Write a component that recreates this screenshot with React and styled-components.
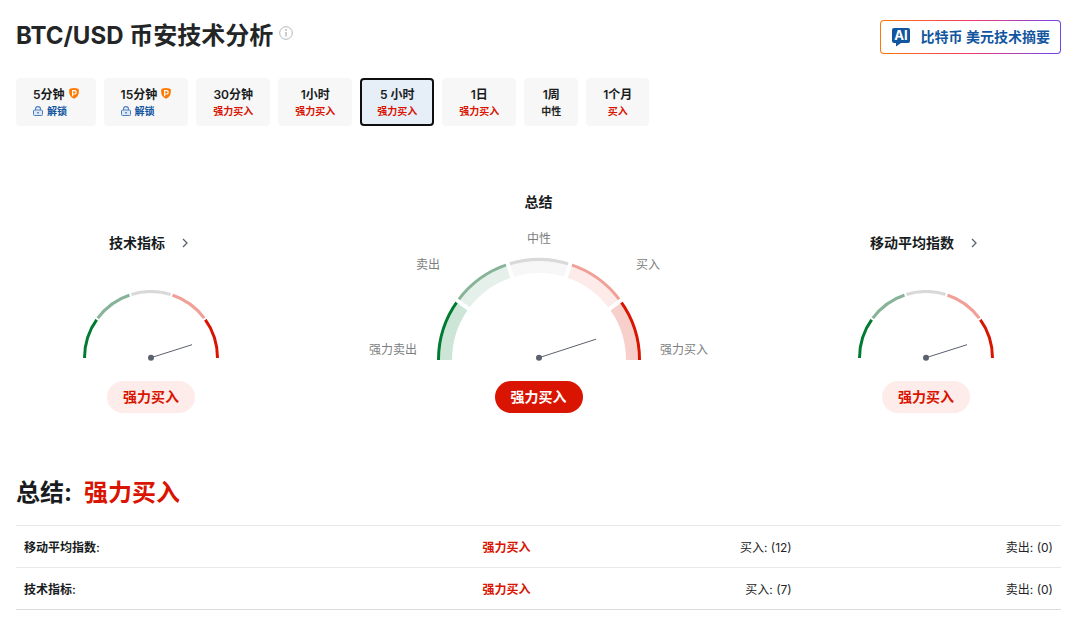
import React, { useState } from "react";
import styled, { createGlobalStyle } from "styled-components";

const RED = "#d91400";
const GREEN = "#007c32";

const GlobalStyle = createGlobalStyle`
  * { box-sizing: border-box; }
  body {
    margin: 0;
    background: #fff;
    color: #232526;
    font-family: Inter, "Noto Sans CJK SC", sans-serif;
  }
  button { font-family: inherit; cursor: pointer; }
`;

const Page = styled.main`
  padding: 20px 17px 12px 16px;
`;

const Header = styled.header`
  display: flex;
  align-items: flex-start;
  justify-content: space-between;
`;

const TitleGroup = styled.div`
  display: flex;
  align-items: flex-start;
  gap: 6px;
`;

const Title = styled.h1`
  margin: 0;
  font-size: 24px;
  line-height: 32px;
  font-weight: 700;
`;

const InfoButton = styled.button`
  display: flex;
  margin: 6px 0 0;
  padding: 0;
  border: 0;
  background: none;
`;

const AiButton = styled.button`
  display: flex;
  align-items: center;
  gap: 9px;
  height: 34px;
  padding: 0 10px;
  border: 1px solid transparent;
  border-radius: 4px;
  background: linear-gradient(#fff, #fff) padding-box,
    linear-gradient(96deg, #ff7901 0%, #f23a6b 50%, #6a45f5 100%) border-box;
  color: #1256a0;
  font-size: 14px;
  line-height: 20px;
  font-weight: 600;
`;

const Periods = styled.div`
  display: flex;
  flex-wrap: wrap;
  gap: 8px;
  margin-top: 24px;
`;

const PeriodButton = styled.button`
  display: flex;
  flex-direction: column;
  align-items: center;
  justify-content: center;
  height: 48px;
  padding: 1px 15px 0;
  border: 2px solid ${(p) => (p.$active ? "#0f0f10" : "transparent")};
  border-radius: 4px;
  background: ${(p) => (p.$active ? "#e6eef8" : "#f7f7f8")} border-box;
`;

const PeriodName = styled.span`
  display: flex;
  align-items: center;
  gap: 4px;
  font-size: 12px;
  line-height: 17px;
  font-weight: 600;
  color: #181c21;
`;

const signalColors = { buy: RED, neutral: "#232526", locked: "#1256a0" };

const PeriodSignal = styled.span`
  display: flex;
  align-items: center;
  align-self: ${(p) => (p.$kind === "locked" ? "flex-start" : "center")};
  gap: 4px;
  font-size: 10px;
  line-height: 16px;
  font-weight: 600;
  color: ${(p) => signalColors[p.$kind]};
`;

const Gauges = styled.section`
  display: grid;
  grid-template-columns: 270fr 505fr 270fr;
  align-items: end;
  margin-top: 66px;
`;

const GaugeCard = styled.div`
  display: flex;
  flex-direction: column;
  align-items: center;
`;

const GaugeTitle = styled.h2`
  margin: 0 0 ${(p) => (p.$main ? 17 : 37)}px;
  font-size: 14px;
  line-height: 20px;
  font-weight: 700;
  color: #181c21;
`;

const GaugeLink = styled.a`
  display: flex;
  align-items: center;
  gap: 12px;
  color: inherit;
  text-decoration: none;
`;

const Drawing = styled.svg`
  display: block;
  flex: none;
`;

const DialLabel = styled.text`
  font-size: 12px;
  fill: #7c7e80;
`;

const Pill = styled.div`
  margin-top: 20px;
  padding: 0 16px;
  border-radius: 16px;
  font-size: 14px;
  line-height: 32px;
  font-weight: 700;
  color: ${(p) => (p.$solid ? "#fff" : RED)};
  background: ${(p) => (p.$solid ? RED : "#fdecea")};
`;

const SummaryHeading = styled.h2`
  display: flex;
  gap: 12px;
  margin: 64px 0 16px;
  font-size: 24px;
  line-height: 32px;
  font-weight: 700;
  color: #181c21;
`;

const Verdict = styled.span`
  color: ${RED};
`;

const SummaryTable = styled.table`
  width: 100%;
  table-layout: fixed;
  border-collapse: separate;
  border-spacing: 0;
  border-top: 1px solid #e6e9eb;
  font-size: 12px;
  line-height: 16px;
`;

const Row = styled.tr`
  & > * {
    height: 42px;
    padding: 3px 8px 0;
    border-bottom: 1px solid #e6e9eb;
  }
  &:last-child > * { border-bottom-color: #d9dcdf; }
`;

const RowName = styled.th`
  text-align: left;
  font-weight: 600;
  color: #181c21;
`;

const Cell = styled.td`
  text-align: right;
  font-weight: ${(p) => (p.$strong ? 700 : 400)};
  color: ${(p) => (p.$strong ? RED : "#232526")};
`;

const InfoIcon = () => (
  <Drawing width="14" height="14" viewBox="0 0 14 14" fill="none" aria-hidden="true">
    <circle cx="7" cy="7" r="6.3" stroke="#b5b8bb" strokeWidth="1" />
    <path d="M7 6V10.4" stroke="#b5b8bb" strokeWidth="1.4" />
    <circle cx="7" cy="4" r="0.9" fill="#b5b8bb" />
  </Drawing>
);

const AiIcon = () => (
  <Drawing width="20" height="20" viewBox="0 0 20 20" aria-hidden="true">
    <path d="M3 1H17Q19 1 19 3V14Q19 16 17 16H10L5 19.5V16H3Q1 16 1 14V3Q1 1 3 1Z" fill="#1256a0" />
    <text x="10" y="13" textAnchor="middle" fontSize="13" fontWeight="700" fill="#fff">AI</text>
  </Drawing>
);

const ProIcon = () => (
  <Drawing width="10" height="14" viewBox="0 0 10 14" fill="none" aria-hidden="true">
    <path d="M.2 1.8Q.3.7 1.6.4Q5-.2 8.4.4Q9.7.7 9.8 1.8Q10.5 8.4 5 10.8Q-.5 8.4 .2 1.8Z" fill="#ff7901" />
    <path d="M3.6 8.2V2.6H5.3Q7.2 2.6 7.2 4.3T5.3 6H3.6" stroke="#fff" strokeWidth="1.2" />
  </Drawing>
);

const LockIcon = () => (
  <Drawing width="10" height="10" viewBox="0 0 10 10" fill="none" aria-hidden="true">
    <path d="M2.6 4V2.8Q2.6.6 5 .6T7.4 2.8V4" stroke="#4a80bf" strokeWidth="1.1" />
    <rect x="0.5" y="4" width="9" height="5.5" rx="1" fill="#dfe9f5" stroke="#4a80bf" />
    <path d="M5 6V7.6" stroke="#1256a0" strokeWidth="1.2" />
  </Drawing>
);

const ChevronIcon = () => (
  <Drawing width="16" height="16" viewBox="0 0 16 16" fill="none" aria-hidden="true">
    <path d="M6 4L10 8L6 12" stroke="#5b616e" strokeWidth="1.3" />
  </Drawing>
);

const polar = (cx, cy, r, deg) => {
  const a = (deg * Math.PI) / 180;
  return [cx - r * Math.cos(a), cy - r * Math.sin(a)];
};

const arc = (cx, cy, r, from, to) => {
  const [x1, y1] = polar(cx, cy, r, from);
  const [x2, y2] = polar(cx, cy, r, to);
  return `M${x1} ${y1}A${r} ${r} 0 0 1 ${x2} ${y2}`;
};

const ringColors = [GREEN, "#87b498", "#d9d9d9", "#f1a097", RED];
const bandColors = ["#cce5d6", "#e6f0ea", "#f7f7f7", "#fdebea", "#f7d0cc"];

function Dial({ cx, cy, radius, band = 0, gap }) {
  return (
    <g fill="none">
      {ringColors.map((color, i) => (
        <g key={color}>
          {band > 0 && (
            <path d={arc(cx, cy, radius - 3 - band / 2, i * 36, i * 36 + 36)} stroke={bandColors[i]} strokeWidth={band} />
          )}
          <path d={arc(cx, cy, radius - 1.5, i * 36, i * 36 + 36)} stroke={color} strokeWidth="3" />
        </g>
      ))}
      {[36, 72, 108, 144].map((deg) => {
        const [x1, y1] = polar(cx, cy, radius - 5 - band, deg);
        const [x2, y2] = polar(cx, cy, radius + 1, deg);
        return <line key={deg} x1={x1} y1={y1} x2={x2} y2={y2} stroke="#fff" strokeWidth={gap} />;
      })}
    </g>
  );
}

function Needle({ x, y, dx, dy }) {
  return (
    <g>
      <line x1={x} y1={y} x2={x + dx} y2={y + dy} stroke="#5b616e" strokeWidth="1" />
      <circle cx={x} cy={y} r="3" fill="#5b616e" />
    </g>
  );
}

function SideGauge({ title }) {
  return (
    <GaugeCard>
      <GaugeTitle>
        <GaugeLink href="#details">{title}<ChevronIcon /></GaugeLink>
      </GaugeTitle>
      <Drawing width="136" height="71" viewBox="0 0 136 71" role="img" aria-label={title}>
        <Dial cx={68} cy={68} radius={68} gap={2} />
        <Needle x={68} y={67.7} dx={41} dy={-13} />
      </Drawing>
      <Pill>强力买入</Pill>
    </GaugeCard>
  );
}

function MainGauge() {
  return (
    <GaugeCard>
      <GaugeTitle $main>总结</GaugeTitle>
      <Drawing width="340" height="132" viewBox="0 0 340 132" role="img" aria-label="总结">
        <Dial cx={170} cy={131} radius={102} band={12} gap={4} />
        <Needle x={170} y={128.7} dx={57} dy={-18.5} />
        <DialLabel x="170" y="14" textAnchor="middle">中性</DialLabel>
        <DialLabel x="71" y="40" textAnchor="end">卖出</DialLabel>
        <DialLabel x="267" y="40">买入</DialLabel>
        <DialLabel x="48" y="125" textAnchor="end">强力卖出</DialLabel>
        <DialLabel x="291" y="125">强力买入</DialLabel>
      </Drawing>
      <Pill $solid>强力买入</Pill>
    </GaugeCard>
  );
}

const periods = [
  { name: "5分钟", signal: "解锁", kind: "locked" },
  { name: "15分钟", signal: "解锁", kind: "locked" },
  { name: "30分钟", signal: "强力买入", kind: "buy" },
  { name: "1小时", signal: "强力买入", kind: "buy" },
  { name: "5 小时", signal: "强力买入", kind: "buy" },
  { name: "1日", signal: "强力买入", kind: "buy" },
  { name: "1周", signal: "中性", kind: "neutral" },
  { name: "1个月", signal: "买入", kind: "buy" },
];

const rows = [
  { name: "移动平均指数:", buy: 12, sell: 0 },
  { name: "技术指标:", buy: 7, sell: 0 },
];

export default function App() {
  const [active, setActive] = useState("5 小时");
  return (
    <Page>
      <GlobalStyle />
      <Header>
        <TitleGroup>
          <Title>BTC/USD 币安技术分析</Title>
          <InfoButton type="button" aria-label="信息"><InfoIcon /></InfoButton>
        </TitleGroup>
        <AiButton type="button"><AiIcon />比特币 美元技术摘要</AiButton>
      </Header>
      <Periods>
        {periods.map(({ name, signal, kind }) => (
          <PeriodButton key={name} type="button" $active={name === active} aria-pressed={name === active} onClick={() => setActive(name)}>
            <PeriodName>{name}{kind === "locked" && <ProIcon />}</PeriodName>
            <PeriodSignal $kind={kind}>{kind === "locked" && <LockIcon />}{signal}</PeriodSignal>
          </PeriodButton>
        ))}
      </Periods>
      <Gauges>
        <SideGauge title="技术指标" />
        <MainGauge />
        <SideGauge title="移动平均指数" />
      </Gauges>
      <SummaryHeading>总结:<Verdict>强力买入</Verdict></SummaryHeading>
      <SummaryTable id="details">
        <tbody>
          {rows.map(({ name, buy, sell }) => (
            <Row key={name}>
              <RowName scope="row">{name}</RowName>
              <Cell $strong>强力买入</Cell>
              <Cell>买入: ({buy})</Cell>
              <Cell>卖出: ({sell})</Cell>
            </Row>
          ))}
        </tbody>
      </SummaryTable>
    </Page>
  );
}
